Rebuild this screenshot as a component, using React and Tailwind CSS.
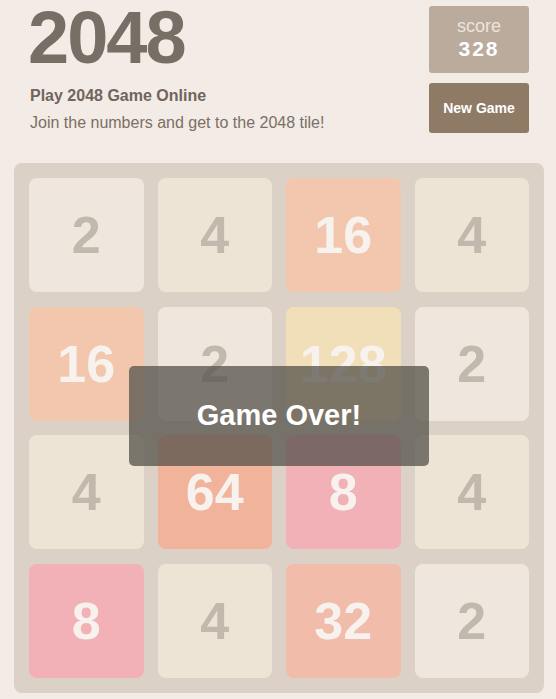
import React from "react";

const board = [
  [2, 4, 16, 4],
  [16, 2, 128, 2],
  [4, 64, 8, 4],
  [8, 4, 32, 2],
];

// tile palette keyed by value
const tileStyles = {
  2: "bg-[#efe6dd] text-[#c1b8ae]",
  4: "bg-[#eee4d6] text-[#c1b8ae]",
  8: "bg-[#f2b1b6] text-[#f7f2ee]",
  16: "bg-[#f2c7ae] text-[#f7f2ee]",
  32: "bg-[#f2bcab] text-[#f7f2ee]",
  64: "bg-[#f2b39b] text-[#f7f2ee]",
  128: "bg-[#f1dfb9] text-[#f7f2ee]",
};

const Tile = ({ value }) => (
  <div
    className={`h-[114px] rounded-[8px] flex items-center justify-center font-bold text-[52px] leading-none ${tileStyles[value]}`}
  >
    {value}
  </div>
);

export default function App() {
  return (
    <div
      className="min-h-[699px] bg-[#f3ebe5] text-[#776e65] font-['Liberation_Sans',Arial,sans-serif]"
    >
      <div className="w-[530px] ml-[14px]">
        <header className="flex justify-between pl-[16px] pr-[15px]">
          <div>
            <h1 className="-ml-[2px] -mt-[2px] text-[74px] font-bold leading-[80px] tracking-[-2px] text-[#776e65]">
              2048
            </h1>
            <p className="mt-[8px] text-[16px] leading-[20px] font-bold text-[#6f655c]">
              Play 2048 Game Online
            </p>
            <p className="mt-[5px] text-[16px] leading-[24px] text-[#7b6f66]">
              Join the numbers and get to the 2048 tile!
            </p>
          </div>
          <div className="mt-[6px] w-[100px] flex flex-col gap-[10px]">
            <div className="h-[67px] rounded-[3px] bg-[#bbab9d] flex flex-col items-center pt-[9px]">
              <span className="text-[18px] leading-[22px] text-[#ede4da]">score</span>
              <span className="text-[21px] leading-[24px] font-bold tracking-[2px] text-white">
                328
              </span>
            </div>
            <button className="h-[50px] rounded-[3px] bg-[#8f7a66] text-white font-bold text-[14px]">
              New Game
            </button>
          </div>
        </header>

        <div className="relative mt-[28px] rounded-[8px] bg-[#dbd1c7] p-[15px] grid grid-cols-4 gap-x-[14px] gap-y-[14.5px]">
          {board.flat().map((v, i) => (
            <Tile key={i} value={v} />
          ))}
          <div className="absolute left-[115px] top-[203px] w-[300px] h-[100px] rounded-[5px] bg-[rgba(84,81,73,0.75)] flex items-center justify-center">
            <span className="text-white font-bold text-[29px]">Game Over!</span>
          </div>
        </div>
      </div>
    </div>
  );
}
